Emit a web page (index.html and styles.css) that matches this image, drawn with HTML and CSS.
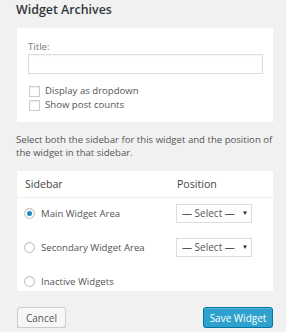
FILE: index.html
```html
<!DOCTYPE html>
<html lang="en">
<head>
    <meta charset="UTF-8">
    <title>Widget Archives</title>
    <link rel="stylesheet" href="styles.css">
</head>
<body>
    <h1 class="widget-title">Widget Archives</h1>

    <div class="panel settings">
        <label class="field-label" for="title">Title:</label>
        <input type="text" id="title" class="text-input">
        <label class="check-row"><span class="checkbox"></span>Display as dropdown</label>
        <label class="check-row"><span class="checkbox"></span>Show post counts</label>
    </div>

    <p class="hint">Select both the sidebar for this widget and the position of the widget in that sidebar.</p>

    <div class="panel sidebars">
        <div class="table-head">
            <span class="col-sidebar">Sidebar</span>
            <span class="col-position">Position</span>
        </div>
        <div class="sidebar-row">
            <span class="col-sidebar"><span class="radio checked"></span>Main Widget Area</span>
            <span class="col-position"><span class="select">— Select — <i class="caret">▼</i></span></span>
        </div>
        <div class="sidebar-row">
            <span class="col-sidebar"><span class="radio"></span>Secondary Widget Area</span>
            <span class="col-position"><span class="select">— Select — <i class="caret">▼</i></span></span>
        </div>
        <div class="sidebar-row">
            <span class="col-sidebar"><span class="radio"></span>Inactive Widgets</span>
        </div>
    </div>

    <div class="actions">
        <button class="btn">Cancel</button>
        <button class="btn primary">Save Widget</button>
    </div>
</body>
</html>
```

FILE: styles.css
```css
body {
    margin: 0;
    padding: 0 13px 0 16px;
    background: #f1f1f1;
    font-family: 'Open Sans', 'Liberation Sans', sans-serif;
    font-size: 9.6px;
    color: #555;
}

.widget-title {
    margin: 0;
    padding-top: 1px;
    height: 27px;
    font-size: 12.4px;
    font-weight: 600;
    line-height: 18px;
    color: #32373c;
}

.panel {
    background: #fff;
    margin-left: 1px;
}

/* Title + checkboxes */
.settings {
    height: 94px;
    padding: 12px 10px 0 11px;
    box-sizing: border-box;
}

.field-label {
    display: block;
    line-height: 13px;
    color: #777;
}

.text-input {
    display: block;
    width: 100%;
    height: 20px;
    margin-top: 1px;
    border: 1px solid #ddd;
    box-sizing: border-box;
    box-shadow: inset 0 1px 2px rgba(0, 0, 0, 0.05);
}

.check-row {
    display: flex;
    align-items: center;
    height: 14px;
    line-height: 14px;
    color: #555;
}

.text-input + .check-row {
    margin-top: 10px;
}

.checkbox {
    width: 11px;
    height: 11px;
    border: 1px solid #ccc;
    box-sizing: border-box;
    margin: 0 5px 0 1px;
    box-shadow: inset 0 1px 2px rgba(0, 0, 0, 0.07);
}

.hint {
    margin: 0;
    padding-top: 11px;
    height: 49px;
    box-sizing: border-box;
    line-height: 13px;
    color: #555;
}

/* Sidebar table */
.sidebars {
    height: 120px;
}

.table-head {
    display: flex;
    align-items: center;
    height: 26px;
    border-bottom: 1px solid #eee;
    font-size: 10.6px;
    color: #444;
}

.col-sidebar {
    display: flex;
    align-items: center;
    width: 152px;
    padding-left: 7px;
}

.table-head .col-sidebar {
    padding-left: 8px;
}

.col-position {
    display: flex;
    align-items: center;
}

.sidebar-row {
    display: flex;
    align-items: center;
    height: 34px;
}

.sidebar-row:nth-child(2) {
    margin-top: -2px;
}

.radio {
    width: 11px;
    height: 11px;
    border: 1px solid #bbb;
    border-radius: 50%;
    box-sizing: border-box;
    margin-right: 6px;
    display: flex;
    align-items: center;
    justify-content: center;
    box-shadow: inset 0 1px 2px rgba(0, 0, 0, 0.07);
}

.radio.checked::after {
    content: "";
    width: 5px;
    height: 5px;
    border-radius: 50%;
    background: #1e8cbe;
}

.select {
    display: flex;
    align-items: center;
    justify-content: space-between;
    width: 76px;
    height: 19px;
    padding: 0 3px 0 5px;
    box-sizing: border-box;
    border: 1px solid #ddd;
    color: #555;
    font-size: 10px;
}

.caret {
    font-style: normal;
    font-size: 6px;
    color: #222;
}

/* Buttons */
.actions {
    display: flex;
    justify-content: space-between;
    padding: 16px 0 0 1px;
}

.btn {
    height: 21px;
    padding: 0 8px;
    border: 1px solid #ccc;
    border-radius: 3px;
    background: #f7f7f7;
    box-shadow: 0 1px 0 #ccc;
    font-family: inherit;
    font-size: 10px;
    color: #555;
}

.btn.primary {
    width: 70px;
    padding: 0;
    background: #2ea2cc;
    border-color: #0074a2;
    box-shadow: inset 0 1px 0 rgba(120, 200, 230, 0.5), 0 1px 0 rgba(0, 0, 0, 0.15);
    color: #fff;
}
```
